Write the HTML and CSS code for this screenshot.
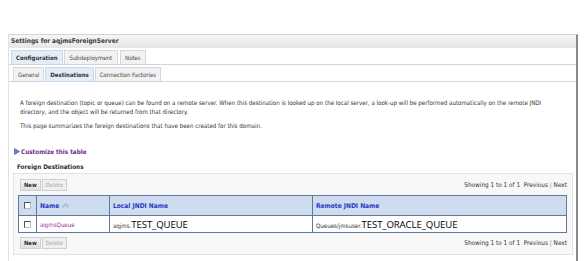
FILE: index.html
```html
<!DOCTYPE html>
<html>
<head>
<meta charset="utf-8">
<link rel="stylesheet" href="styles.css">
</head>
<body>
<div class="page">
  <div class="panel">
    <div class="panel-head">Settings for aqjmsForeignServer</div>
    <div class="tabs tabs-top">
      <span class="tab active">Configuration</span>
      <span class="tab">Subdeployment</span>
      <span class="tab">Notes</span>
    </div>
    <div class="tabs tabs-sub">
      <span class="tab">General</span>
      <span class="tab active">Destinations</span>
      <span class="tab">Connection Factories</span>
    </div>
    <div class="content">
      <p class="desc">A foreign destination (topic or queue) can be found on a remote server. When this destination is looked up on the local server, a look-up will be performed automatically on the remote JNDI<br>directory, and the object will be returned from that directory.</p>
      <p class="desc desc2">This page summarizes the foreign destinations that have been created for this domain.</p>
      <div class="customize">
        <svg class="tri" width="6" height="7" viewBox="0 0 6 7"><path d="M0.5 0.5 L5.5 3.5 L0.5 6.5 Z" fill="#5b7fd0" stroke="#3a5aa8" stroke-width="0.6"/></svg>
        <span>Customize this table</span>
      </div>
      <div class="section-title">Foreign Destinations</div>
      <div class="box">
        <div class="toolbar">
          <div class="btns"><span class="btn">New</span><span class="btn disabled">Delete</span></div>
          <div class="pager">Showing 1 to 1 of 1 &nbsp;Previous <span class="sep">|</span> Next</div>
        </div>
        <table class="grid">
          <tr class="hdr">
            <th class="c-chk"><span class="chk"></span></th>
            <th class="c-name">Name <svg class="sort" width="7" height="5" viewBox="0 0 7 5"><path d="M0.5 3 L3.5 0.6 L6.5 3 M0.5 4.6 L3.5 2.2 L6.5 4.6" fill="none" stroke="#8fa3c6" stroke-width="0.8"/></svg></th>
            <th class="c-local">Local JNDI Name</th>
            <th class="c-remote">Remote JNDI Name</th>
          </tr>
          <tr class="row">
            <td class="c-chk"><span class="chk"></span></td>
            <td class="c-name"><span class="link">aqjmsQueue</span></td>
            <td class="c-local"><span class="small">aqjms.</span><span class="big">TEST_QUEUE</span></td>
            <td class="c-remote"><span class="small">Queues/jmsuser.</span><span class="big">TEST_ORACLE_QUEUE</span></td>
          </tr>
        </table>
        <div class="toolbar bottom">
          <div class="btns"><span class="btn">New</span><span class="btn disabled">Delete</span></div>
          <div class="pager">Showing 1 to 1 of 1 &nbsp;Previous <span class="sep">|</span> Next</div>
        </div>
      </div>
    </div>
  </div>
</div>
</body>
</html>
```

FILE: styles.css
```css
html, body {
  margin: 0;
  padding: 0;
  background: #ffffff;
}
body {
  font-family: "DejaVu Sans Condensed", "DejaVu Sans", "Liberation Sans", sans-serif;
  font-size: 6px;
  color: #333333;
  width: 584px;
  height: 261px;
  overflow: hidden;
}
.page {
  padding: 34px 0 0 8px;
  height: 227px;
}
.panel {
  width: 570px;
  height: 227px;
  border-top: 1px solid #d4d4d4;
  border-left: 1px solid #e2e2e2;
  border-right: 2px solid #8a8a8a;
  box-sizing: border-box;
}
.panel-head {
  height: 13px;
  line-height: 13px;
  padding-left: 2px;
  font-weight: bold;
  font-size: 6.5px;
  color: #3a3a3a;
  background: linear-gradient(#f6f6f6, #e6e6e6);
}
.tabs {
  display: flex;
  gap: 1px;
  padding-left: 2px;
  border-bottom: 1px solid #c5d9ea;
}
.tabs-top {
  margin-top: 2px;
  height: 14px;
}
.tabs-sub {
  margin-top: 2px;
  height: 14px;
  padding-left: 4px;
}
.tab {
  display: flex;
  align-items: center;
  padding: 0 4px;
  background: #f2f2f2;
  border: 1px solid #d8d8d8;
  border-bottom: none;
  color: #444;
  font-size: 6px;
}
.tabs-top .tab:nth-child(2) { padding: 0 5px; }
.tabs-top .tab:nth-child(3) { margin-left: 1px; }
.tab.active {
  background: #e4edf5;
  border-color: #c9d8e6;
  font-weight: bold;
  color: #2c3340;
}
.content {
  padding-left: 11px;
}
.desc {
  margin: 16px 0 0 0;
  line-height: 9px;
  font-size: 6.15px;
  color: #333;
}
.desc2 {
  margin-top: 5px;
}
.customize {
  margin: 17px 0 0 -6px;
  display: flex;
  align-items: center;
  gap: 1px;
  color: #6f2c86;
  font-weight: bold;
  font-size: 6.3px;
  height: 8px;
}
.section-title {
  margin: 8px 0 0 -3px;
  font-weight: bold;
  font-size: 6.3px;
  color: #2d2d2d;
  height: 8px;
}
.box {
  margin: 2px 0 0 -7px;
  width: 560px;
  height: 82px;
  box-sizing: border-box;
  border: 1px solid #e2e2e2;
  background: #f8f8f8;
  padding: 5px 5px 0 4px;
}
.toolbar {
  display: flex;
  justify-content: space-between;
  align-items: center;
  height: 11px;
}
.toolbar.bottom {
  margin-top: 4px;
}
.btns {
  display: flex;
  gap: 1px;
  padding-left: 2px;
}
.btn {
  display: inline-block;
  height: 10px;
  line-height: 10px;
  padding: 0 3px;
  background: linear-gradient(#f4f4f4, #e0e0e0);
  border: 1px solid #cfcfcf;
  font-weight: bold;
  color: #2a2a2a;
  font-size: 5.8px;
}
.btn.disabled {
  font-weight: normal;
  color: #a8a8a8;
  background: #efefef;
}
.pager {
  font-size: 6.4px;
  color: #333;
  padding-right: 0;
}
.sep {
  color: #888;
}
.grid {
  margin-top: 5px;
  width: 549px;
  border-collapse: collapse;
  border: 1px solid #5c7a9b;
}
.grid th, .grid td {
  border: 1px solid #5c7a9b;
  padding: 0 0 0 3px;
  text-align: left;
}
.hdr th {
  height: 19px;
  background: #cfdcef;
  color: #2439c2;
  font-weight: bold;
  font-size: 6.6px;
}
.row td {
  height: 16px;
  background: #ffffff;
  font-size: 6.1px;
  vertical-align: middle;
}
.c-chk {
  width: 17px;
  text-align: center !important;
  padding: 0 !important;
}
.c-name { width: 69px; }
.c-local { width: 199px; }
.chk {
  display: inline-block;
  width: 5px;
  height: 5px;
  border: 1px solid #555;
  border-right-color: #bbb;
  border-bottom-color: #bbb;
  background: #fff;
  vertical-align: middle;
}
.sort {
  vertical-align: middle;
  margin-left: 1px;
}
.link {
  color: #9a2f9e;
}
.small {
  color: #333;
}
.big {
  font-family: "Open Sans", "Liberation Sans", sans-serif;
  font-size: 9.6px;
  color: #000;
  letter-spacing: -0.1px;
}
```
